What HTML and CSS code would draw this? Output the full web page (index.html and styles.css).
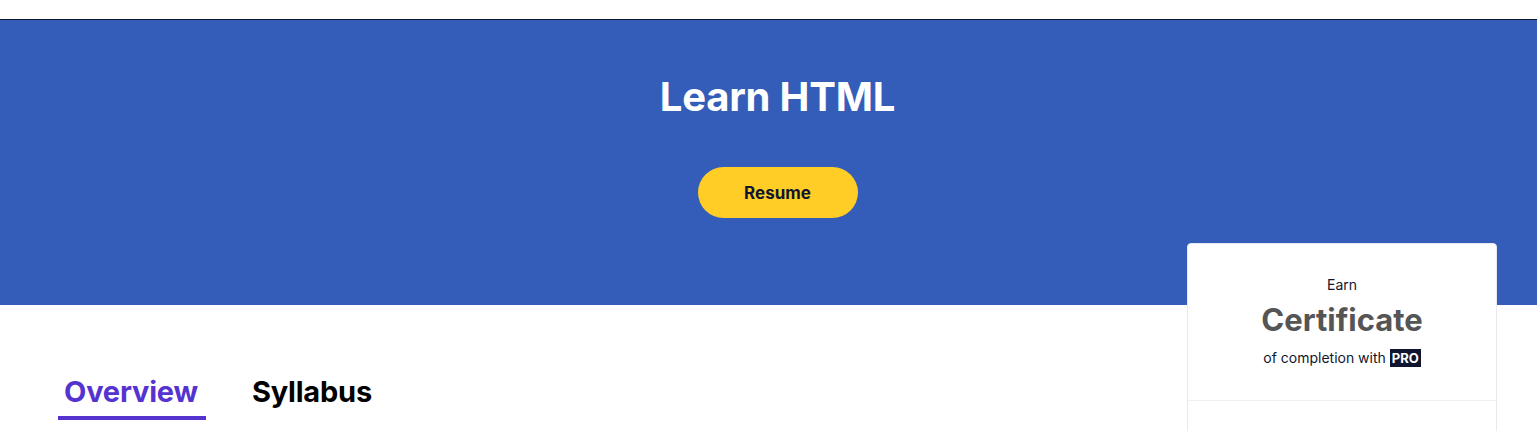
FILE: index.html
```html
<!DOCTYPE html>
<html lang="en">
<head>
    <meta charset="UTF-8">
    <meta name="viewport" content="width=device-width, initial-scale=1.0">
    <title>Learn HTML</title>
    <link rel="stylesheet" href="styles.css">
</head>
<body>
    <div class="topbar"></div>

    <section class="hero">
        <h1>Learn HTML</h1>
        <a href="#" class="resume-button">Resume</a>
    </section>

    <div class="page">
        <div class="content">
            <nav class="tabs">
                <a href="#" class="tab active">Overview</a>
                <a href="#" class="tab">Syllabus</a>
            </nav>
        </div>

        <aside class="cert-card">
            <div class="cert-top">
                <p class="cert-earn">Earn</p>
                <p class="cert-title">Certificate</p>
                <p class="cert-sub">of completion with <span class="pro">PRO</span></p>
            </div>
            <div class="cert-bottom"></div>
        </aside>
    </div>
</body>
</html>
```

FILE: styles.css
```css
body {
    margin: 0;
    font-family: Inter, "Noto Sans", sans-serif;
    background-color: white;
    color: #10162f;
}

.topbar {
    height: 19px;
    background-color: white;
    border-bottom: 1px solid #10162f;
}

.hero {
    height: 285px;
    padding-left: 18px;
    background-color: #335db8;
    display: flex;
    flex-direction: column;
    align-items: center;
}

.hero h1 {
    margin: 51px 0 0;
    color: white;
    font-size: 40px;
    font-weight: 700;
    line-height: 52px;
    letter-spacing: -0.2px;
}

.resume-button {
    margin-top: 44px;
    width: 160px;
    height: 51px;
    border-radius: 26px;
    background-color: #ffcd25;
    color: #10162f;
    font-size: 17px;
    font-weight: 700;
    text-decoration: none;
    display: flex;
    align-items: center;
    justify-content: center;
}

.page {
    display: flex;
    justify-content: space-between;
    padding: 0 40px 0 58px;
}

.content {
    padding-top: 69px;
}

.tabs {
    display: flex;
    gap: 40px;
}

.tab {
    font-size: 29px;
    font-weight: 700;
    color: black;
    text-decoration: none;
    padding: 0 8px 7px 6px;
    border-bottom: 4px solid transparent;
    letter-spacing: -0.2px;
}

.tab.active {
    color: #5533d1;
    border-bottom-color: #5533d1;
}

.cert-card {
    width: 310px;
    margin-top: -62px;
    background-color: white;
    border: 1px solid #e8eaef;
    border-radius: 4px;
    box-sizing: border-box;
}

.cert-top {
    text-align: center;
    padding: 32px 0 33px;
    border-bottom: 1px solid #eef0f3;
}

.cert-earn {
    margin: 0;
    font-size: 14px;
    line-height: 18px;
}

.cert-title {
    margin: 6px 0 0;
    font-size: 31px;
    font-weight: 700;
    color: #555555;
    line-height: 40px;
}

.cert-sub {
    margin: 9px 0 0;
    font-size: 14px;
    line-height: 18px;
}

.pro {
    background-color: #10162f;
    color: white;
    font-weight: 700;
    font-size: 13px;
    padding: 1px 2px;
}

.cert-bottom {
    height: 60px;
}
```
